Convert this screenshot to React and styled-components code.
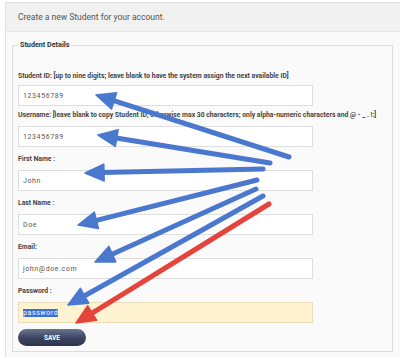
import React from 'react'
import styled, { createGlobalStyle } from 'styled-components'

const GlobalStyle = createGlobalStyle`
  html, body {
    margin: 0;
    padding: 0;
    background: #fff;
    overflow: hidden;
  }
  body {
    font-family: Roboto, "Liberation Sans", sans-serif;
  }
`

const Page = styled.div`
  position: relative;
  width: 400px;
  height: 357px;
  padding: 2px 0 0 5px;
  box-sizing: border-box;
`

const Panel = styled.section`
  width: 400px;
  height: 360px;
  border: 1px solid #e2e2e2;
  background: #fafafa;
  box-sizing: border-box;
`

const Header = styled.header`
  height: 28px;
  display: flex;
  align-items: center;
  padding-left: 12px;
  background: #f1f1f1;
  border-bottom: 1px solid #e6e6e6;
  color: #555;
  font-size: 8.5px;
`

const Body = styled.div`
  padding: 8px 0 0 6px;
`

const Fieldset = styled.fieldset`
  width: 381px;
  box-sizing: border-box;
  margin: 0;
  padding: 21px 5px 5px;
  border: 1px solid #dcdcdc;
`

const Legend = styled.legend`
  padding: 0 2px;
  font-size: 7.2px;
  line-height: 10px;
  font-weight: 700;
  color: #333;
`

const Field = styled.div`
  margin-bottom: ${p => (p.$compact ? 4 : p.$last ? 0 : 7)}px;
`

const Label = styled.label`
  display: block;
  height: 10px;
  line-height: 10px;
  margin-bottom: ${p => (p.$compact ? 4 : 6)}px;
  font-size: 6.8px;
  font-weight: 700;
  color: #444;
  white-space: nowrap;
`

const Input = styled.div`
  width: 295px;
  height: 21px;
  box-sizing: border-box;
  display: flex;
  align-items: center;
  padding-left: 4px;
  border: 1px solid ${p => (p.$autofill ? '#eadfb8' : '#dedede')};
  background: ${p => (p.$autofill ? '#fff3d2' : '#fff')};
  font-size: 7px;
  letter-spacing: 0.6px;
  color: #555;
`

const Selected = styled.span`
  background: #3a6fd8;
  color: #fff;
`

const SaveButton = styled.button`
  display: block;
  margin-top: 6px;
  width: 68px;
  height: 17px;
  border: none;
  border-radius: 9px;
  background: linear-gradient(#6a7491, #3a4360 55%, #2c344e);
  color: #fff;
  font-family: Roboto, "Liberation Sans", sans-serif;
  font-size: 6.5px;
  font-weight: 700;
  padding: 0;
`

const Overlay = styled.svg`
  position: absolute;
  left: 0;
  top: 0;
  pointer-events: none;
`

const fields = [
  { label: 'Student ID: [up to nine digits; leave blank to have the system assign the next available ID]', value: '123456789', compact: true },
  { label: 'Username: [leave blank to copy Student ID; otherwise max 30 characters; only alpha-numeric characters and @ - _ . !:]', value: '123456789' },
  { label: 'First Name :', value: 'John' },
  { label: 'Last Name :', value: 'Doe' },
  { label: 'Email:', value: 'john@doe.com' },
]

const arrows = [
  { from: [289, 157], to: [96, 95], color: '#4a78cf' },
  { from: [270, 163], to: [98, 135], color: '#4a78cf' },
  { from: [263, 169], to: [85, 173], color: '#4a78cf' },
  { from: [257, 180], to: [78, 225], color: '#4a78cf' },
  { from: [256, 189], to: [95, 262], color: '#4a78cf' },
  { from: [263, 196], to: [68, 305], color: '#4a78cf' },
  { from: [269, 204], to: [76, 323], color: '#e4443c' },
]

const Arrow = ({ from, to, color }) => {
  const dx = to[0] - from[0]
  const dy = to[1] - from[1]
  const len = Math.hypot(dx, dy)
  const ux = dx / len
  const uy = dy / len
  const head = 19
  const half = 8.5
  const bx = to[0] - ux * head
  const by = to[1] - uy * head
  const pts = [
    [to[0], to[1]],
    [bx - uy * half, by + ux * half],
    [bx + uy * half, by - ux * half],
  ].map(p => p.join(',')).join(' ')
  return (
    <g>
      <line x1={from[0]} y1={from[1]} x2={bx + ux * 2} y2={by + uy * 2}
        stroke={color} strokeWidth="5" strokeLinecap="round" />
      <polygon points={pts} fill={color} stroke={color} strokeWidth="1.5" strokeLinejoin="round" />
    </g>
  )
}

const App = () =>
  <Page>
    <GlobalStyle />
    <Panel>
      <Header>Create a new Student for your account.</Header>
      <Body>
        <Fieldset>
          <Legend>Student Details</Legend>
          {fields.map(f =>
            <Field key={f.label} $compact={f.compact}>
              <Label $compact={f.compact}>{f.label}</Label>
              <Input>{f.value}</Input>
            </Field>
          )}
          <Field $last>
            <Label>Password :</Label>
            <Input $autofill><Selected>password</Selected></Input>
          </Field>
          <SaveButton>SAVE</SaveButton>
        </Fieldset>
      </Body>
    </Panel>
    <Overlay width="400" height="357" viewBox="0 0 400 357">
      {arrows.map((a, i) => <Arrow key={i} {...a} />)}
    </Overlay>
  </Page>

export default App
